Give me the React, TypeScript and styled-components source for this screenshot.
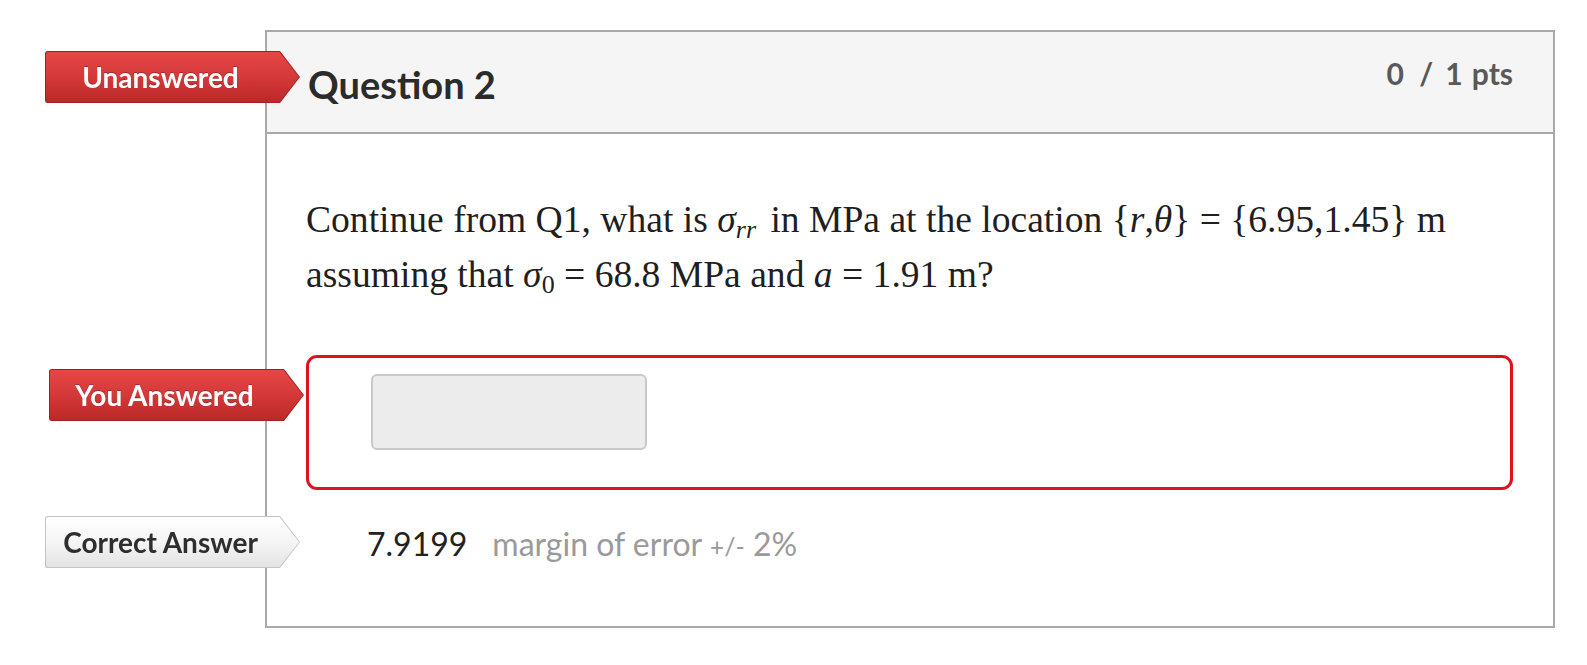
import React from "react";
import styled, { createGlobalStyle } from "styled-components";

const Global = createGlobalStyle`
  html, body { margin: 0; padding: 0; background: #ffffff; }
  body { font-family: Lato, "Liberation Sans", sans-serif; }
`;

const Page = styled.div`
  padding: 30px 0 0 265px;
  width: 1587px;
  box-sizing: border-box;
`;

const Card = styled.div`
  width: 1290px;
  box-sizing: border-box;
  border: 2px solid #a9a9a9;
  background: #fff;
`;

const Header = styled.div`
  position: relative;
  height: 102px;
  box-sizing: border-box;
  background: #f5f5f5;
  border-bottom: 2px solid #a9a9a9;
  display: flex;
  justify-content: space-between;
  align-items: flex-start;
  padding: 0 40px 0 41px;
`;

const Title = styled.h2`
  margin: 30px 0 0;
  font-family: Lato, sans-serif;
  font-weight: 700;
  font-size: 38px;
  line-height: 45px;
  color: #2b2b2b;
`;

const Points = styled.div`
  margin-top: 23px;
  font-family: Lato, sans-serif;
  font-weight: 700;
  font-size: 30px;
  line-height: 36px;
  color: #595959;
`;

const Earned = styled.span`
  margin-right: 8px;
`;

const Possible = styled.span`
  margin-left: 12px;
  margin-right: 2px;
`;

const Body = styled.div`
  padding: 0 40px 60px 39px;
`;

const QuestionText = styled.p`
  margin: 58px 0 53px;
  font-family: "Liberation Serif", "Times New Roman", serif;
  font-size: 37.6px;
  line-height: 55px;
  color: #1f1f1f;
`;

const Mi = styled.i`
  font-style: italic;
`;

const Sub = styled.sub<{ $italic?: boolean }>`
  font-size: 26px;
  line-height: 0;
  vertical-align: -6px;
  margin-right: ${(p) => (p.$italic ? "5px" : "0")};
  font-style: ${(p) => (p.$italic ? "italic" : "normal")};
`;

const AnswerRow = styled.div`
  position: relative;
`;

const AnswerBox = styled.div`
  width: 1207px;
  height: 135px;
  box-sizing: border-box;
  border: 3px solid #e0121b;
  border-radius: 11px;
  padding: 16px 0 0 62px;
`;

const Input = styled.div`
  width: 276px;
  height: 76px;
  box-sizing: border-box;
  background: #ececec;
  border: 2px solid #c9c9c9;
  border-radius: 6px;
`;

const CorrectRow = styled.div`
  position: relative;
  margin-top: 34px;
  padding-left: 61px;
  display: flex;
  align-items: baseline;
  gap: 25px;
  font-family: Lato, sans-serif;
  font-size: 32px;
  line-height: 40px;
`;

const Value = styled.span`
  color: #222;
`;

const Margin = styled.span`
  color: #9a9a9a;
`;

const Small = styled.span`
  font-size: 25px;
`;

const Badge = styled.div<{ $tone: "red" | "grey"; $left: number; $top: number }>`
  position: absolute;
  left: ${(p) => p.$left}px;
  top: ${(p) => p.$top}px;
  width: 255px;
  height: 52px;
  border-radius: 3px 0 0 3px;
  background: ${(p) => (p.$tone === "red" ? "#a51f1f" : "#c4c4c4")};
  clip-path: polygon(0 0, calc(100% - 20px) 0, 100% 50%, calc(100% - 20px) 100%, 0 100%);
  filter: drop-shadow(0 1px 1px rgba(0, 0, 0, 0.15));
`;

const BadgeFace = styled.div<{ $tone: "red" | "grey" }>`
  position: absolute;
  inset: 1px;
  border-radius: 2px 0 0 2px;
  background: ${(p) =>
    p.$tone === "red"
      ? "linear-gradient(to bottom, #e54747 0%, #d53838 50%, #bb2929 100%)"
      : "linear-gradient(to bottom, #ffffff 0%, #f5f5f5 50%, #e3e3e3 100%)"};
  clip-path: polygon(0 0, calc(100% - 19.5px) 0, 100% 50%, calc(100% - 19.5px) 100%, 0 100%);
  display: flex;
  align-items: center;
  justify-content: center;
  padding-right: 24px;
  box-sizing: border-box;
  font-family: Lato, sans-serif;
  font-weight: 700;
  font-size: 28px;
  color: ${(p) => (p.$tone === "red" ? "#ffffff" : "#2e2e2e")};
  text-shadow: ${(p) => (p.$tone === "red" ? "0 -1px 0 rgba(0,0,0,0.25)" : "none")};
`;

function Arrow({ tone, left, top, label }: { tone: "red" | "grey"; left: number; top: number; label: string }) {
  return (
    <Badge $tone={tone} $left={left} $top={top}>
      <BadgeFace $tone={tone}>{label}</BadgeFace>
    </Badge>
  );
}

export default function App() {
  return (
    <>
      <Global />
      <Page>
        <Card>
          <Header>
            <Arrow tone="red" left={-222} top={19} label="Unanswered" />
            <Title>Question 2</Title>
            <Points>
              <Earned>0</Earned> /<Possible>1</Possible> pts
            </Points>
          </Header>
          <Body>
            <QuestionText>
              Continue from Q1, what is <Mi>σ</Mi>
              <Sub $italic>rr</Sub> in MPa at the location {"{"}
              <Mi>r</Mi>,<Mi>θ</Mi>
              {"}"} = {"{"}6.95,1.45{"}"} m assuming that <Mi>σ</Mi>
              <Sub>0</Sub> = 68.8 MPa and <Mi>a</Mi> = 1.91 m?
            </QuestionText>
            <AnswerRow>
              <Arrow tone="red" left={-257} top={14} label="You Answered" />
              <AnswerBox>
                <Input />
              </AnswerBox>
            </AnswerRow>
            <CorrectRow>
              <Arrow tone="grey" left={-261} top={-8} label="Correct Answer" />
              <Value>7.9199</Value>
              <Margin>
                margin of error <Small>+/-</Small> 2%
              </Margin>
            </CorrectRow>
          </Body>
        </Card>
      </Page>
    </>
  );
}
